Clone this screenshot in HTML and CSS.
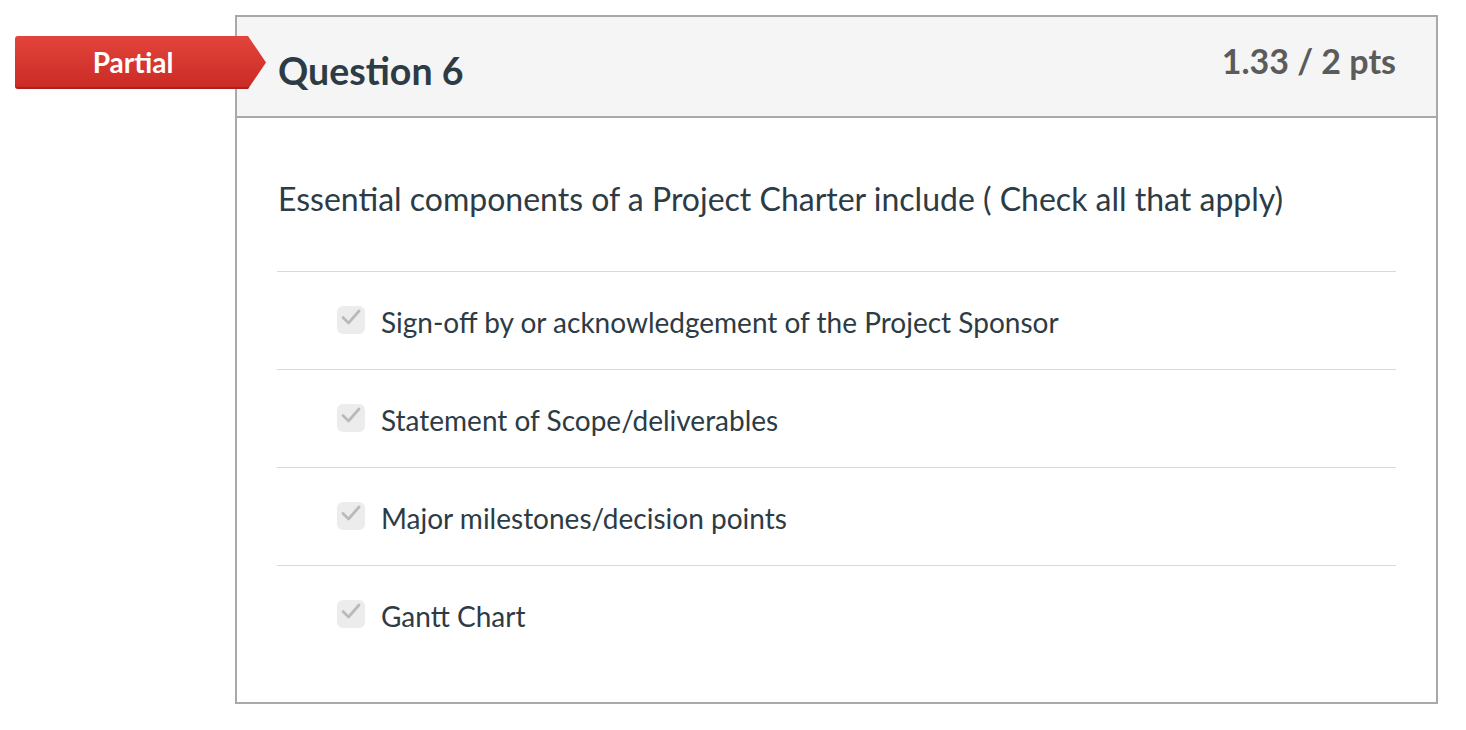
FILE: index.html
```html
<!DOCTYPE html>
<html>
<head>
<meta charset="utf-8">
<link rel="stylesheet" href="styles.css">
</head>
<body>
<div class="page">
  <div class="badge"><span>Partial</span></div>
  <div class="card">
    <div class="card-header">
      <h2 class="title">Question 6</h2>
      <div class="pts">1.33 / 2 pts</div>
    </div>
    <div class="card-body">
      <p class="question">Essential components of a Project Charter include ( Check all that apply)</p>
      <div class="answers">
        <div class="answer">
          <span class="check"><svg viewBox="0 0 28 28" width="28" height="28"><path d="M6 11.5 L11.5 17 L22 5" fill="none" stroke="#bababa" stroke-width="2.8" stroke-linecap="round" stroke-linejoin="round"/></svg></span>
          <span class="label">Sign-off by or acknowledgement of the Project Sponsor</span>
        </div>
        <div class="answer">
          <span class="check"><svg viewBox="0 0 28 28" width="28" height="28"><path d="M6 11.5 L11.5 17 L22 5" fill="none" stroke="#bababa" stroke-width="2.8" stroke-linecap="round" stroke-linejoin="round"/></svg></span>
          <span class="label">Statement of Scope/deliverables</span>
        </div>
        <div class="answer">
          <span class="check"><svg viewBox="0 0 28 28" width="28" height="28"><path d="M6 11.5 L11.5 17 L22 5" fill="none" stroke="#bababa" stroke-width="2.8" stroke-linecap="round" stroke-linejoin="round"/></svg></span>
          <span class="label">Major milestones/decision points</span>
        </div>
        <div class="answer">
          <span class="check"><svg viewBox="0 0 28 28" width="28" height="28"><path d="M6 11.5 L11.5 17 L22 5" fill="none" stroke="#bababa" stroke-width="2.8" stroke-linecap="round" stroke-linejoin="round"/></svg></span>
          <span class="label">Gantt Chart</span>
        </div>
      </div>
    </div>
  </div>
</div>
</body>
</html>
```
FILE: styles.css
```css
html, body {
  margin: 0;
  padding: 0;
  background: #ffffff;
}
body {
  font-family: Lato, "Open Sans", sans-serif;
  color: #2d3b45;
}
.page {
  position: relative;
  padding: 15px 0 0 235px;
}
.badge {
  position: absolute;
  left: 15px;
  top: 36px;
  width: 251px;
  height: 53px;
  background: linear-gradient(#e3443c, #c92b24);
  border-radius: 3px 0 0 3px;
  clip-path: polygon(0 0, 233px 0, 251px 26.5px, 233px 53px, 0 53px);
  box-shadow: inset 0 -2px 0 rgba(120,10,10,0.35);
  display: flex;
  align-items: center;
}
.badge span {
  width: 236px;
  text-align: center;
  color: #fff;
  font-weight: 700;
  font-size: 28px;
  line-height: 1;
  margin-top: -1px;
}
.card {
  width: 1199px;
  border: 2px solid #a9a9a9;
  background: #fff;
}
.card-header {
  height: 99px;
  background: #f5f5f5;
  border-bottom: 2px solid #a9a9a9;
  display: flex;
  justify-content: space-between;
  align-items: flex-start;
  padding: 0 40px 0 41px;
}
.title {
  margin: 0;
  margin-top: 32px;
  font-size: 37.5px;
  font-weight: 700;
  line-height: 44px;
  color: #2d3b45;
}
.pts {
  margin-top: 22px;
  font-size: 34px;
  font-weight: 700;
  line-height: 44px;
  color: #5b5b5b;
}
.card-body {
  padding: 0 40px 39px 40px;
}
.question {
  margin: 0;
  padding: 63px 0 54px 1px;
  font-size: 32px;
  line-height: 36px;
}
.answer {
  height: 95px;
  padding-top: 2px;
  border-top: 1px solid #d9d9d9;
  display: flex;
  align-items: center;
  padding-left: 60px;
  box-sizing: content-box;
}
.check {
  width: 28px;
  height: 28px;
  background: #ececec;
  border-radius: 6px;
  display: flex;
  margin-right: 16px;
  margin-top: -4px;
}
.label {
  font-size: 28px;
  line-height: 32px;
  color: #2d3b45;
}
```
